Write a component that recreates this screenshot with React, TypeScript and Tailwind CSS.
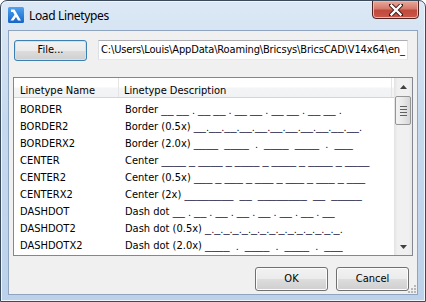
import React from "react";

const rows: [string, string, string][] = [
  ["BORDER", "Border ", "__ __ . __ __ . __ __ . __ __ . __ __ ."],
  ["BORDER2", "Border (0.5x) ", "__.__.__.__.__.__.__.__.__.__.__."],
  ["BORDERX2", "Border (2.0x) ", "____  ____  .  ____  ____  .  ___"],
  ["CENTER", "Center ", "____ _ ____ _ ____ _ ____ _ ____ _ ____"],
  ["CENTER2", "Center (0.5x) ", "___ _ ___ _ ___ _ ___ _ ___ _ ___"],
  ["CENTERX2", "Center (2x) ", "________  __  ________  __  _____"],
  ["DASHDOT", "Dash dot ", "__ . __ . __ . __ . __ . __ . __ . __"],
  ["DASHDOT2", "Dash dot (0.5x) ", "_._._._._._._._._._._._._._._."],
  ["DASHDOTX2", "Dash dot (2.0x) ", "____  .  ____  .  ____  .  ___"],
];

const ui = "font-['DejaVu_Sans_Condensed','DejaVu_Sans',sans-serif] [font-stretch:condensed] text-[11px] text-black";

function WinButton({ label, focused }: { label: string; focused?: boolean }) {
  return (
    <div
      className={`w-[73px] flex items-center justify-center rounded-[3px] border ${
        focused ? "h-[21px] border-[#3c7fb1] shadow-[inset_0_0_0_1px_#c6e6f7]" : "h-[24px] border-[#707070] shadow-[inset_0_0_0_1px_#fcfcfc]"
      } bg-[linear-gradient(to_bottom,#f2f2f2_0%,#ebebeb_50%,#dddddd_51%,#cfcfcf_100%)] ${ui}`}
    >
      {label}
    </div>
  );
}

function Logo() {
  return (
    <svg width="16" height="16" viewBox="0 0 16 16">
      <defs>
        <linearGradient id="lg" x1="0" y1="0" x2="0" y2="1">
          <stop offset="0" stopColor="#4fa3f0" />
          <stop offset="1" stopColor="#1565c8" />
        </linearGradient>
      </defs>
      <rect width="16" height="16" rx="1.5" fill="url(#lg)" />
      <path d="M3 2.5 H6.5 L13 13.5 H10 L8 10 L5.5 13.5 H2.5 L6.5 7.8 L5 5 H3 Z" fill="#fff" />
    </svg>
  );
}

export default function App() {
  return (
    <div className="w-[426px] h-[302px] flex flex-col rounded-t-[7px] border border-[#3b4b5c] bg-[linear-gradient(to_bottom,#dce8f5_0%,#c5d9ee_40%,#bcd2ea_100%)] shadow-[inset_0_0_0_1px_#eef5fc] overflow-hidden">
      {/* title bar */}
      <div className="h-[29px] flex items-start shrink-0">
        <div className="ml-[7px] mt-[6px]">
          <Logo />
        </div>
        <div className="ml-[5px] mt-[6px] font-['Noto_Sans',sans-serif] text-[12px] tracking-[-0.35px] leading-[17px] text-black">Load Linetypes</div>
        <div className="ml-auto mr-[6px] w-[47px] h-[19px] -mt-px rounded-b-[4px] border border-[#4e2522] bg-[linear-gradient(to_bottom,#e9a99b_0%,#d47a6c_45%,#c14a3a_55%,#c9574a_100%)] shadow-[inset_0_0_0_1px_#f0b8ab] flex items-center justify-center">
          <svg width="14" height="12" viewBox="0 0 14 12">
            <path d="M2 1 L12 11 M12 1 L2 11" stroke="#3a1a18" strokeWidth="4.2" strokeLinecap="square" />
            <path d="M2.5 1.5 L11.5 10.5 M11.5 1.5 L2.5 10.5" stroke="#ffffff" strokeWidth="2.4" strokeLinecap="square" />
          </svg>
        </div>
      </div>

      {/* client area */}
      <div className="mx-[7px] mb-[6px] flex-1 flex flex-col bg-[#f0f0f0] border border-[#8ea4bf] relative">
        <div className="flex items-start mt-[9px] ml-[5px]">
          <WinButton label="File..." focused />
          <div className={`ml-[11px] w-[310px] h-[20px] bg-white border border-[#abadb3] border-b-[#e3e9ef] border-x-[#dbdfe6] overflow-hidden whitespace-nowrap pl-[2px] leading-[18px] tracking-[-0.15px] ${ui}`}>
            C:\Users\Louis\AppData\Roaming\Bricsys\BricsCAD\V14x64\en_
          </div>
        </div>

        <div className="ml-[4px] mt-[16px] w-[400px] h-[179px] border border-[#828790] bg-white flex">
          <div className="flex-1 flex flex-col">
            <div className={`h-[23px] flex bg-[linear-gradient(to_bottom,#ffffff_0%,#ffffff_45%,#f3f4f6_55%,#f1f2f4_100%)] border-b border-[#d5d5d5] leading-[13px] ${ui}`}>
              <div className="w-[105px] pl-[6px] pt-[6px] border-r border-[#e5e5e5]">Linetype Name</div>
              <div className="flex-1 pl-[5px] pt-[6px] border-r border-[#e5e5e5] mr-[2px]">Linetype Description</div>
            </div>
            <div className="pt-[4px]">
              {rows.map(([n, d, p]) => (
                <div key={n} className={`h-[17px] flex items-center whitespace-pre ${ui}`}>
                  <div className="w-[106px] pl-[6px]">{n}</div>
                  <div className="pl-[5px]">{d}</div>
                  <div className="font-['Liberation_Sans',sans-serif] [font-stretch:normal] text-[#101040]">{p}</div>
                </div>
              ))}
            </div>
          </div>
          {/* scrollbar */}
          <div className="w-[18px] flex flex-col bg-[linear-gradient(to_right,#e3e3e3,#f0f0f0_20%,#f0f0f0_80%,#e8e8e8)]">
            <div className="h-[17px] flex items-center justify-center">
              <svg width="7" height="4" viewBox="0 0 7 4"><path d="M3.5 0 L7 4 H0 Z" fill="#404040" /></svg>
            </div>
            <div className="mx-[1px] mt-[1px] h-[29px] rounded-[2px] border border-[#959595] bg-[linear-gradient(to_right,#f3f3f3,#e8e8e9_50%,#d6d6d8)] flex flex-col items-center justify-center gap-[2px]">
              <div className="w-[7px] h-px bg-[#606060]" />
              <div className="w-[7px] h-px bg-[#606060]" />
              <div className="w-[7px] h-px bg-[#606060]" />
              <div className="w-[7px] h-px bg-[#606060]" />
            </div>
            <div className="flex-1" />
            <div className="h-[17px] flex items-center justify-center">
              <svg width="7" height="4" viewBox="0 0 7 4"><path d="M0 0 H7 L3.5 4 Z" fill="#404040" /></svg>
            </div>
          </div>
        </div>

        <div className="flex justify-end gap-[8px] mt-[11px] mr-[8px]">
          <WinButton label="OK" />
          <WinButton label="Cancel" />
        </div>

        {/* resize grip */}
        <svg className="absolute right-[1px] bottom-[1px]" width="8" height="8" viewBox="0 0 8 8">
          {[[6, 0], [6, 3], [3, 3], [6, 6], [3, 6], [0, 6]].map(([x, y]) => (
            <rect key={`${x}-${y}`} x={x} y={y} width="2" height="2" fill="#b8b8b8" />
          ))}
        </svg>
      </div>
    </div>
  );
}
